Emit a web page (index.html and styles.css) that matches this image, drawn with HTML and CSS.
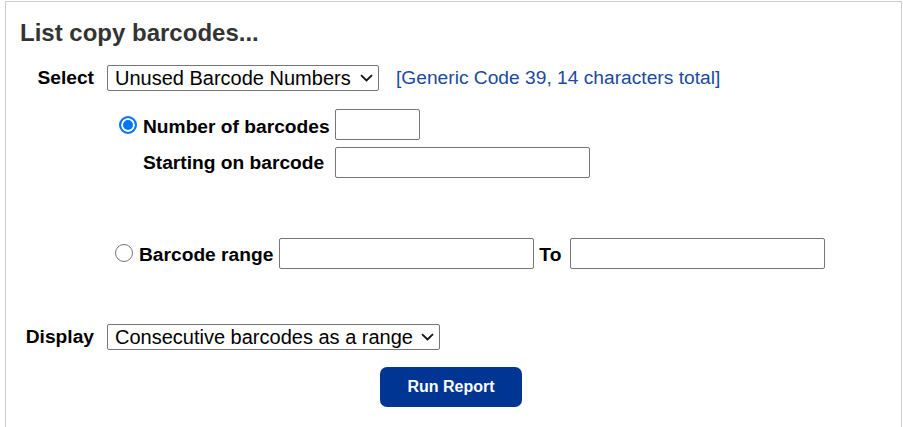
FILE: index.html
```html
<!DOCTYPE html>
<html lang="en">
<head>
<meta charset="utf-8">
<title>List copy barcodes</title>
<link rel="stylesheet" href="styles.css">
</head>
<body>
<div class="panel">
  <h1 class="title">List copy barcodes...</h1>
  <form class="form">
    <div class="row row-select">
      <label class="field-label">Select</label>
      <span class="select-wrap select-wrap-main">
        <select class="select select-main">
          <option>Unused Barcode Numbers</option>
        </select>
        <svg class="chevron" width="13" height="8" viewBox="0 0 13 8"><path d="M1 1.2 L6.5 6.4 L12 1.2" fill="none" stroke="#111" stroke-width="1.8"/></svg>
      </span>
      <span class="format-note">[Generic Code 39, 14 characters total]</span>
    </div>

    <div class="count-grid">
      <input type="radio" name="mode" class="radio" checked>
      <label class="opt-label opt-label-first">Number of barcodes</label>
      <input type="text" class="text-input input-small">
      <span></span>
      <label class="opt-label">Starting on barcode</label>
      <input type="text" class="text-input input-wide">
    </div>

    <div class="row row-range">
      <input type="radio" name="mode" class="radio">
      <label class="opt-label range-label">Barcode range</label>
      <input type="text" class="text-input input-wide">
      <span class="to-label">To</span>
      <input type="text" class="text-input input-wide">
    </div>

    <div class="row row-display">
      <label class="field-label">Display</label>
      <span class="select-wrap select-wrap-display">
        <select class="select select-display">
          <option>Consecutive barcodes as a range</option>
        </select>
        <svg class="chevron" width="13" height="8" viewBox="0 0 13 8"><path d="M1 1.2 L6.5 6.4 L12 1.2" fill="none" stroke="#111" stroke-width="1.8"/></svg>
      </span>
    </div>

    <div class="actions">
      <button type="button" class="run-btn">Run Report</button>
    </div>
  </form>
</div>
</body>
</html>
```

FILE: styles.css
```css
html, body {
  margin: 0;
  padding: 0;
  background: #ffffff;
}

body {
  font-family: "Liberation Sans", Arial, sans-serif;
  font-size: 19.2px;
  color: #000;
  overflow: hidden;
}

.panel {
  margin: 1px 1px 0 5px;
  border: 1px solid #cccccc;
  padding: 0 14px;
  min-height: 460px;
  box-sizing: border-box;
}

.title {
  margin: 17px 0 0 0;
  font-size: 24px;
  line-height: 28px;
  font-weight: bold;
  color: #333333;
}

.form {
  margin: 0;
}

.row {
  display: flex;
  align-items: center;
}

.field-label {
  width: 74px;
  text-align: right;
  font-weight: bold;
  line-height: 22px;
  margin-right: 13px;
}

.row-select {
  margin-top: 18px;
  height: 26px;
}

.select-wrap {
  position: relative;
  display: inline-block;
  height: 26px;
}

.select {
  appearance: none;
  -webkit-appearance: none;
  height: 26px;
  box-sizing: border-box;
  border: 1px solid #767676;
  border-radius: 2px;
  background: #fff;
  font-family: "Liberation Sans", Arial, sans-serif;
  font-size: 20px;
  color: #000;
  padding: 0 0 0 7px;
  margin: 0;
  line-height: 24px;
}

.select-main {
  width: 272px;
}

.select-display {
  width: 333px;
}

.chevron {
  position: absolute;
  right: 6px;
  top: 9px;
  pointer-events: none;
}

.format-note {
  margin-left: 17px;
  color: #1a4b9c;
  line-height: 22px;
}

.count-grid {
  display: grid;
  grid-template-columns: 18px 186px auto;
  column-gap: 6px;
  row-gap: 7px;
  align-items: center;
  justify-content: start;
  margin: 18px 0 0 99px;
}

.radio {
  appearance: none;
  -webkit-appearance: none;
  margin: 0;
  width: 18px;
  height: 18px;
  box-sizing: border-box;
  border: 1px solid #767676;
  border-radius: 50%;
  background: #fff;
}

.radio:checked {
  border: 2px solid #0075ff;
  background: #0075ff;
  box-shadow: inset 0 0 0 2px #ffffff;
}

.opt-label {
  font-weight: bold;
  line-height: 22px;
  white-space: nowrap;
}

.opt-label-first {
  padding-top: 4px;
}

.text-input {
  height: 31px;
  box-sizing: border-box;
  border: 1px solid #767676;
  border-radius: 2px;
  background: #fff;
  margin: 0;
  padding: 0 4px;
  font-family: "Liberation Sans", Arial, sans-serif;
  font-size: 16px;
}

.input-small {
  width: 85px;
}

.input-wide {
  width: 255px;
}

.row-range {
  margin: 60px 0 0 95px;
  height: 31px;
}

.row-range .radio {
  margin-top: -2px;
}

.range-label {
  margin: 0 6px 0 6px;
  padding-top: 3px;
}

.to-label {
  font-weight: bold;
  line-height: 22px;
  padding-top: 3px;
  margin: 0 9px 0 5px;
}

.row-display {
  margin-top: 55px;
  height: 26px;
}

.actions {
  margin: 17px 0 0 360px;
}

.run-btn {
  width: 142px;
  height: 40px;
  border: none;
  border-radius: 7px;
  background: #003594;
  color: #ffffff;
  font-family: "Liberation Sans", Arial, sans-serif;
  font-size: 16px;
  font-weight: bold;
  padding: 0;
  margin: 0;
}
```
